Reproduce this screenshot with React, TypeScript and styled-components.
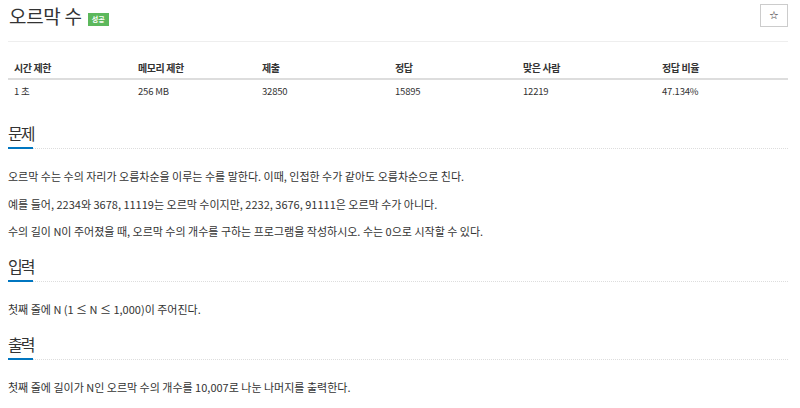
import styled, { createGlobalStyle } from "styled-components";

const GlobalStyle = createGlobalStyle`
  body {
    margin: 0;
    background: #fff;
    color: #333;
    font-family: "Noto Sans CJK KR", "Noto Sans", sans-serif;
  }
`;

const columns = [
  { label: "시간 제한", value: "1 초", width: 124 },
  { label: "메모리 제한", value: "256 MB", width: 124 },
  { label: "제출", value: "32850", width: 133 },
  { label: "정답", value: "15895", width: 128 },
  { label: "맞은 사람", value: "12219", width: 139 },
  { label: "정답 비율", value: "47.134%", width: 132 },
];

const sections = [
  {
    title: "문제",
    lines: [
      "오르막 수는 수의 자리가 오름차순을 이루는 수를 말한다. 이때, 인접한 수가 같아도 오름차순으로 친다.",
      "예를 들어, 2234와 3678, 11119는 오르막 수이지만, 2232, 3676, 91111은 오르막 수가 아니다.",
      "수의 길이 N이 주어졌을 때, 오르막 수의 개수를 구하는 프로그램을 작성하시오. 수는 0으로 시작할 수 있다.",
    ],
  },
  {
    title: "입력",
    lines: ["첫째 줄에 N (1 ≤ N ≤ 1,000)이 주어진다."],
  },
  {
    title: "출력",
    lines: ["첫째 줄에 길이가 N인 오르막 수의 개수를 10,007로 나눈 나머지를 출력한다."],
  },
];

export default function App() {
  return (
    <Page>
      <GlobalStyle />
      <Header>
        <Title>
          오르막 수<Badge>성공</Badge>
        </Title>
        <StarButton>☆</StarButton>
      </Header>

      <InfoTable>
        <colgroup>
          {columns.map((c) => (
            <col key={c.label} style={{ width: c.width }} />
          ))}
        </colgroup>
        <thead>
          <tr>
            {columns.map((c) => (
              <Th key={c.label}>{c.label}</Th>
            ))}
          </tr>
        </thead>
        <tbody>
          <tr>
            {columns.map((c) => (
              <Td key={c.label}>{c.value}</Td>
            ))}
          </tr>
        </tbody>
      </InfoTable>

      {sections.map((s) => (
        <Section key={s.title}>
          <Headline>
            <HeadlineText>{s.title}</HeadlineText>
          </Headline>
          <Body>
            {s.lines.map((line) => (
              <Paragraph key={line}>{line}</Paragraph>
            ))}
          </Body>
        </Section>
      ))}
    </Page>
  );
}

const Page = styled.div`
  width: 780px;
  padding: 4px 12px 0 8px;
`;

const Header = styled.div`
  display: flex;
  justify-content: space-between;
  align-items: flex-start;
  padding-bottom: 14px;
  border-bottom: 1px solid #eee;
`;

const Title = styled.h1`
  display: flex;
  align-items: center;
  margin: 0;
  padding-left: 1px;
  font-size: 19px;
  line-height: 23px;
  font-weight: 400;
  letter-spacing: -0.3px;
  color: #333;
`;

const Badge = styled.span`
  margin: 8px 0 0 6px;
  padding: 0 4px;
  height: 13px;
  line-height: 13px;
  background: #5cb85c;
  color: #fff;
  font-size: 7px;
  font-weight: 700;
  letter-spacing: 0;
`;

const StarButton = styled.button`
  width: 28px;
  height: 23px;
  padding: 0;
  border: 1px solid #ccc;
  background: #fff;
  color: #111;
  font-family: "DejaVu Sans", sans-serif;
  font-size: 11px;
  font-weight: 700;
  line-height: 21px;
  cursor: pointer;
`;

const InfoTable = styled.table`
  width: 780px;
  margin-top: 16px;
  border-collapse: collapse;
  table-layout: fixed;
`;

const Th = styled.th`
  padding: 4px 6px;
  line-height: 12px;
  text-align: left;
  font-size: 10px;
  font-weight: 700;
  letter-spacing: -0.4px;
  border-bottom: 2px solid #ddd;
`;

const Td = styled.td`
  padding: 5px 6px;
  line-height: 12px;
  font-size: 9.5px;
  letter-spacing: -0.2px;
`;

const Section = styled.section`
  margin-top: 16px;

  &:first-of-type {
    margin-top: 21px;
  }
`;

const Headline = styled.div`
  display: flex;
  border-bottom: 1px dotted #ddd;
`;

const HeadlineText = styled.h2`
  margin: 0 0 -1px;
  padding-bottom: 4px;
  font-size: 16px;
  line-height: 20px;
  font-weight: 400;
  letter-spacing: -2px;
  color: #333;
  border-bottom: 2px solid #0076c0;
`;

const Body = styled.div`
  padding-top: 19px;
`;

const Paragraph = styled.p`
  margin: 0 0 10.5px;
  font-size: 11px;
  line-height: 17px;
  letter-spacing: 0;
  color: #333;
`;
